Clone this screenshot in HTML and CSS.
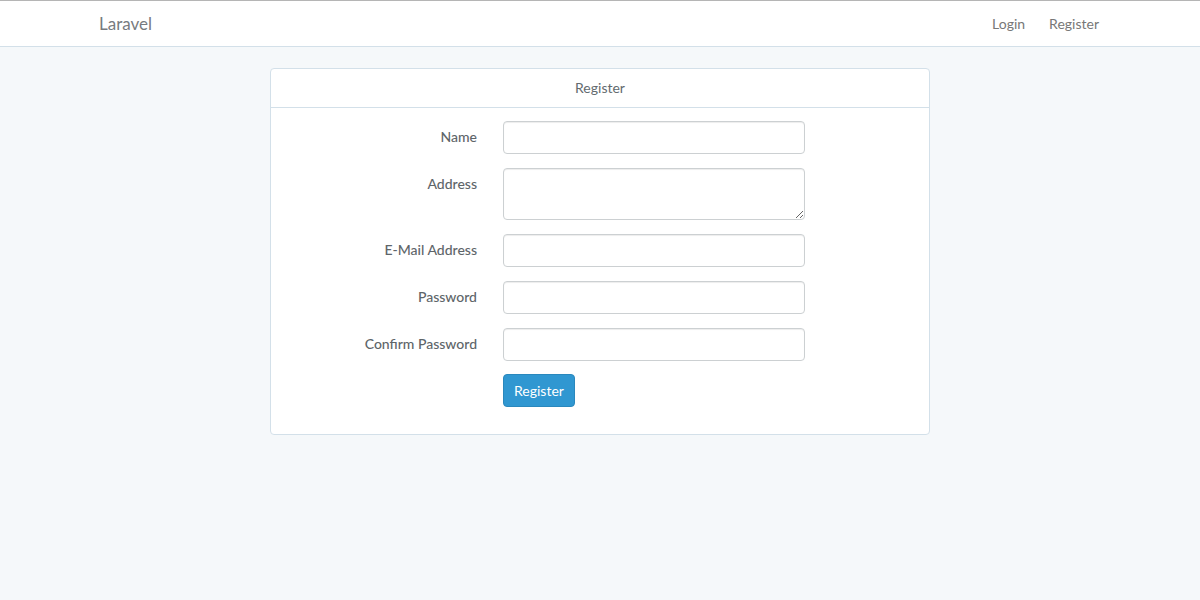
FILE: index.html
```html
<!DOCTYPE html>
<html lang="en">
  <head>
    <meta charset="UTF-8" />
    <meta name="viewport" content="width=device-width, initial-scale=1.0" />
    <title>Laravel</title>
    <link rel="stylesheet" href="styles.css">
  </head>
  <body>
    <nav class="navbar">
      <div class="navbar-inner">
        <a class="brand" href="#">Laravel</a>
        <ul class="nav-links">
          <li><a href="#">Login</a></li>
          <li><a href="#">Register</a></li>
        </ul>
      </div>
    </nav>

    <div class="panel">
      <div class="panel-heading">Register</div>
      <form class="panel-body">
        <div class="form-group">
          <label for="name">Name</label>
          <input id="name" type="text" class="form-control" />
        </div>
        <div class="form-group">
          <label for="address">Address</label>
          <textarea id="address" class="form-control textarea"></textarea>
        </div>
        <div class="form-group">
          <label for="email">E-Mail Address</label>
          <input id="email" type="email" class="form-control" />
        </div>
        <div class="form-group">
          <label for="password">Password</label>
          <input id="password" type="password" class="form-control" />
        </div>
        <div class="form-group">
          <label for="password-confirm">Confirm Password</label>
          <input id="password-confirm" type="password" class="form-control" />
        </div>
        <div class="form-group form-actions">
          <span class="label-spacer"></span>
          <button type="button" class="btn-primary">Register</button>
        </div>
      </form>
    </div>
  </body>
</html>
```

FILE: styles.css
```css
body {
  margin: 0;
  padding: 0;
  font-family: "Lato", "Open Sans", sans-serif;
  font-size: 14px;
  color: #636b6f;
  background: #f5f8fa;
}

.navbar {
  background: #fff;
  border-top: 1px solid #b5b5b5;
  border-bottom: 1px solid #d3e0e9;
  height: 45px;
}

.navbar-inner {
  width: 1002px;
  margin: 0 auto;
  height: 100%;
  display: flex;
  align-items: center;
  justify-content: space-between;
}

.brand {
  color: #777b80;
  font-size: 17px;
  text-decoration: none;
}

.nav-links {
  list-style: none;
  margin: 0 2px 0 0;
  padding: 0;
  display: flex;
  gap: 24px;
}

.nav-links a {
  color: #777;
  text-decoration: none;
  font-size: 14px;
}

.panel {
  width: 658px;
  margin: 21px auto 0;
  background: #fff;
  border: 1px solid #d3e0e9;
  border-radius: 4px;
}

.panel-heading {
  height: 38px;
  line-height: 37px;
  text-align: center;
  border-bottom: 1px solid #d3e0e9;
  color: #636b6f;
}

.panel-body {
  padding: 13px 15px 27px;
  display: flex;
  flex-direction: column;
  gap: 14px;
}

.form-group {
  display: flex;
  align-items: flex-start;
  gap: 26px;
}

.form-actions {
  margin-top: -1px;
}

.form-group label,
.label-spacer {
  width: 191px;
  flex: none;
  text-align: right;
  padding-top: 6px;
  line-height: 20px;
  font-weight: 500;
  color: #5e6569;
}

.label-spacer {
  padding-top: 0;
}

.form-control {
  width: 302px;
  height: 33px;
  box-sizing: border-box;
  margin: 0;
  padding: 6px 12px;
  border: 1px solid #ccd0d2;
  border-radius: 4px;
  box-shadow: inset 0 1px 1px rgba(0, 0, 0, 0.075);
  font-family: inherit;
  font-size: 14px;
  background: #fff;
}

.textarea {
  height: 52px;
  resize: vertical;
}

.btn-primary {
  height: 33px;
  padding: 0 10px;
  border: 1px solid #2a88bd;
  border-radius: 4px;
  background: #3097d1;
  color: #fff;
  font-family: inherit;
  font-size: 14px;
  cursor: pointer;
}
```
